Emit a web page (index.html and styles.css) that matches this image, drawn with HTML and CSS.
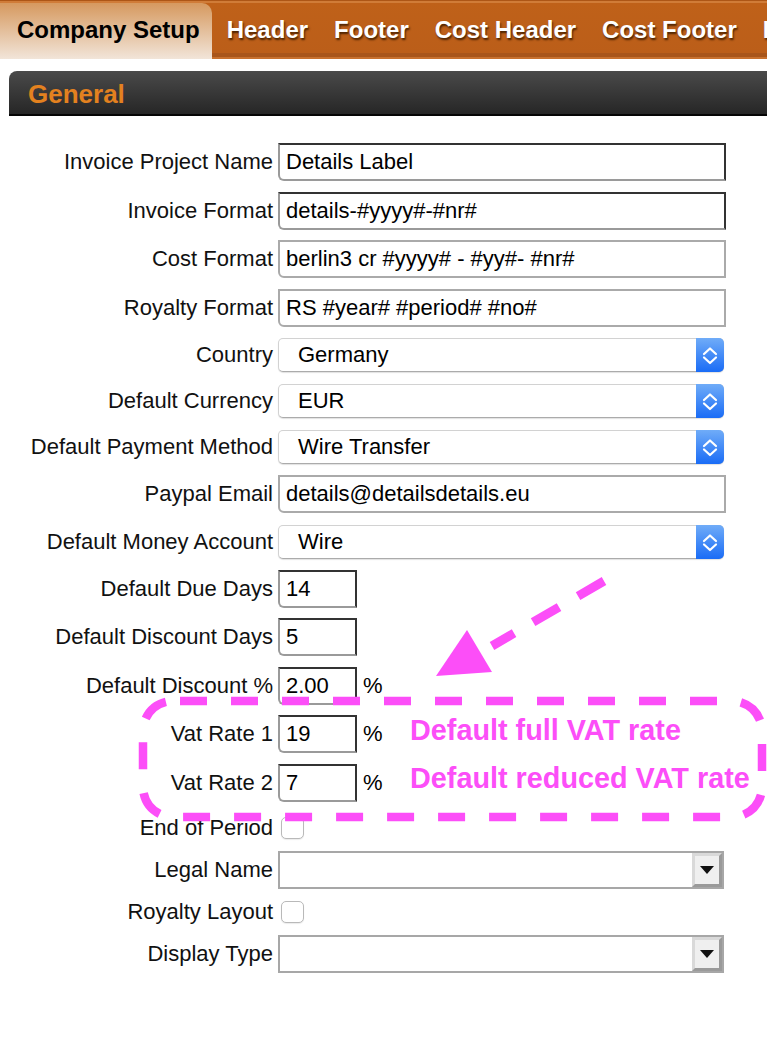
FILE: index.html
```html
<!DOCTYPE html>
<html>
<head>
<meta charset="utf-8">
<title>Company Setup</title>
<link rel="stylesheet" href="styles.css">
</head>
<body>
<div class="tabbar">
  <div class="tab active">Company Setup</div>
  <div class="tab first">Header</div>
  <div class="tab">Footer</div>
  <div class="tab">Cost Header</div>
  <div class="tab">Cost Footer</div>
  <div class="tab">Invoices</div>
</div>

<div class="section-head">General</div>

<div class="form">
  <div class="row txt">
    <div class="label">Invoice Project Name</div>
    <input class="field" type="text" value="Details Label">
  </div>
  <div class="row txt">
    <div class="label">Invoice Format</div>
    <input class="field" type="text" value="details-#yyyy#-#nr#">
  </div>
  <div class="row txt">
    <div class="label">Cost Format</div>
    <input class="field light" type="text" value="berlin3 cr #yyyy# - #yy#- #nr#">
  </div>
  <div class="row txt">
    <div class="label">Royalty Format</div>
    <input class="field light" type="text" value="RS #year# #period# #no#">
  </div>
  <div class="row sel">
    <div class="label">Country</div>
    <div class="mac"><span class="mac-text">Germany</span><span class="stepper"><svg width="28" height="34" viewBox="0 0 28 34"><polyline points="8,16 14,10.5 20,16" fill="none" stroke="#fff" stroke-width="2.2" stroke-linecap="round" stroke-linejoin="round"/><polyline points="8,19.5 14,25 20,19.5" fill="none" stroke="#fff" stroke-width="2.2" stroke-linecap="round" stroke-linejoin="round"/></svg></span></div>
  </div>
  <div class="row sel">
    <div class="label">Default Currency</div>
    <div class="mac"><span class="mac-text">EUR</span><span class="stepper"><svg width="28" height="34" viewBox="0 0 28 34"><polyline points="8,16 14,10.5 20,16" fill="none" stroke="#fff" stroke-width="2.2" stroke-linecap="round" stroke-linejoin="round"/><polyline points="8,19.5 14,25 20,19.5" fill="none" stroke="#fff" stroke-width="2.2" stroke-linecap="round" stroke-linejoin="round"/></svg></span></div>
  </div>
  <div class="row sel">
    <div class="label">Default Payment Method</div>
    <div class="mac"><span class="mac-text">Wire Transfer</span><span class="stepper"><svg width="28" height="34" viewBox="0 0 28 34"><polyline points="8,16 14,10.5 20,16" fill="none" stroke="#fff" stroke-width="2.2" stroke-linecap="round" stroke-linejoin="round"/><polyline points="8,19.5 14,25 20,19.5" fill="none" stroke="#fff" stroke-width="2.2" stroke-linecap="round" stroke-linejoin="round"/></svg></span></div>
  </div>
  <div class="row txt">
    <div class="label">Paypal Email</div>
    <input class="field light" type="text" value="details@detailsdetails.eu">
  </div>
  <div class="row sel">
    <div class="label">Default Money Account</div>
    <div class="mac"><span class="mac-text">Wire</span><span class="stepper"><svg width="28" height="34" viewBox="0 0 28 34"><polyline points="8,16 14,10.5 20,16" fill="none" stroke="#fff" stroke-width="2.2" stroke-linecap="round" stroke-linejoin="round"/><polyline points="8,19.5 14,25 20,19.5" fill="none" stroke="#fff" stroke-width="2.2" stroke-linecap="round" stroke-linejoin="round"/></svg></span></div>
  </div>
  <div class="row txt">
    <div class="label">Default Due Days</div>
    <input class="field small" type="text" value="14">
  </div>
  <div class="row txt">
    <div class="label">Default Discount Days</div>
    <input class="field small" type="text" value="5">
  </div>
  <div class="row txt">
    <div class="label">Default Discount %</div>
    <input class="field small" type="text" value="2.00">
    <span class="pct">%</span>
  </div>
  <div class="row txt">
    <div class="label">Vat Rate 1</div>
    <input class="field small" type="text" value="19">
    <span class="pct">%</span>
  </div>
  <div class="row txt">
    <div class="label">Vat Rate 2</div>
    <input class="field small" type="text" value="7">
    <span class="pct">%</span>
  </div>
  <div class="row chk">
    <div class="label">End of Period</div>
    <span class="checkbox"></span>
  </div>
  <div class="row old">
    <div class="label">Legal Name</div>
    <div class="oldsel"><span class="old-btn"><svg width="16" height="10" viewBox="0 0 16 10"><polygon points="1,1 15,1 8,9" fill="#111"/></svg></span></div>
  </div>
  <div class="row chk">
    <div class="label">Royalty Layout</div>
    <span class="checkbox"></span>
  </div>
  <div class="row old">
    <div class="label">Display Type</div>
    <div class="oldsel"><span class="old-btn"><svg width="16" height="10" viewBox="0 0 16 10"><polygon points="1,1 15,1 8,9" fill="#111"/></svg></span></div>
  </div>
</div>

<svg class="annot" width="767" height="1049" viewBox="0 0 767 1049">
  <rect x="143" y="701" width="619" height="116" rx="30" ry="30" fill="none" stroke="#fc4ef8" stroke-width="8.5" stroke-dasharray="27 24" stroke-dashoffset="44"/>
  <line x1="604" y1="581" x2="492" y2="646" stroke="#fc4ef8" stroke-width="9" stroke-dasharray="30 22"/>
  <polygon points="467,630 436,676 492,672" fill="#fc4ef8"/>
  <text class="note" x="410" y="740">Default full VAT rate</text>
  <text class="note" x="410" y="788">Default reduced VAT rate</text>
</svg>
</body>
</html>
```

FILE: styles.css
```css
* {
  box-sizing: border-box;
}

body {
  margin: 0;
  width: 767px;
  height: 1049px;
  overflow: hidden;
  position: relative;
  background: #ffffff;
  color: #000000;
  font-family: "Liberation Sans", Arial, sans-serif;
}

/* ---------- tab bar ---------- */
.tabbar {
  display: flex;
  height: 59px;
  padding-top: 3px;
  white-space: nowrap;
  overflow: hidden;
  background: linear-gradient(to bottom,
    #ad5616 0px, #ad5616 1px,
    #d07c38 1px, #d07c38 3px,
    #bf6119 3px, #bb5e19 53px,
    #a8551a 53px, #a8551a 57px,
    #c8712e 57px, #c8712e 59px);
}

.tab {
  flex: none;
  display: flex;
  align-items: center;
  padding: 0 13px 3px;
  font-size: 24px;
  font-weight: bold;
  color: #ffffff;
  text-shadow: 1px 2px 2px #4a2200;
}

.tab.first {
  margin-left: 2px;
}

.tab.active {
  color: #000000;
  text-shadow: none;
  padding-left: 17px;
  padding-right: 12px;
  border-top-right-radius: 10px;
  background: linear-gradient(to bottom, #d6995f, #f2e5d9);
}

/* ---------- section header ---------- */
.section-head {
  margin: 12px 0 0 9px;
  height: 45px;
  padding: 3px 0 0 19px;
  display: flex;
  align-items: center;
  border-top-left-radius: 8px;
  border-bottom: 2px solid #050505;
  background: linear-gradient(to bottom, #4a4a4a, #262626);
  color: #e3811f;
  font-size: 26px;
  font-weight: bold;
}

/* ---------- form ---------- */
.form {
  margin-top: 22px;
}

.row {
  display: flex;
  align-items: center;
}

.row.txt { height: 48.5px; }
.row.sel { height: 46px; }
.row.chk { height: 41px; }
.row.old { height: 43px; }

.label {
  flex: none;
  width: 273px;
  margin-right: 5px;
  text-align: right;
  font-size: 22px;
  color: #111111;
}

.field {
  width: 448px;
  height: 38px;
  margin: 0;
  padding: 0 6px;
  border: 2px solid;
  border-color: #333333 #333333 #9a9a9a #9a9a9a;
  border-bottom-left-radius: 6px;
  background: #ffffff;
  color: #000000;
  font: 22px "Liberation Sans", Arial, sans-serif;
  outline: none;
}

.field.light {
  border-color: #aaaaaa;
}

.field.small {
  width: 79px;
}

.pct {
  margin-left: 6px;
  font-size: 22px;
}

/* mac style select */
.mac {
  width: 446px;
  height: 34px;
  display: flex;
  align-items: stretch;
  border: 1px solid #d2d2d2;
  border-bottom-color: #ababab;
  border-radius: 5px;
  background: #ffffff;
  box-shadow: 0 1px 1px rgba(0, 0, 0, 0.12);
  font-size: 22px;
}

.mac-text {
  flex: 1;
  display: flex;
  align-items: center;
  padding-left: 19px;
}

.stepper {
  width: 28px;
  margin: -1px -1px -1px 0;
  border-radius: 0 5px 5px 0;
  background: linear-gradient(to bottom, #70acf8, #1a6cf6);
  display: flex;
  align-items: center;
  justify-content: center;
}

.stepper svg {
  display: block;
}

/* old style select */
.oldsel {
  width: 446px;
  height: 38px;
  display: flex;
  justify-content: flex-end;
  border: 2px solid #a7a7a7;
  background: #ffffff;
}

.old-btn {
  width: 30px;
  display: flex;
  align-items: center;
  justify-content: center;
  background: #efefef;
  border: 3px solid;
  border-color: #d9d9d9 #9a9a9a #9a9a9a #d9d9d9;
}

.old-btn svg {
  display: block;
}

/* checkbox */
.checkbox {
  width: 23px;
  height: 22px;
  margin-left: 3px;
  border: 1px solid #b9b9b9;
  border-radius: 5px;
  background: #ffffff;
  box-shadow: 0 1px 1px rgba(0, 0, 0, 0.08);
}

/* ---------- annotation overlay ---------- */
.annot {
  position: absolute;
  left: 0;
  top: 0;
  pointer-events: none;
}

.note {
  font-family: "Liberation Sans", Arial, sans-serif;
  font-size: 28.8px;
  font-weight: bold;
  fill: #fc4ef8;
}
```
